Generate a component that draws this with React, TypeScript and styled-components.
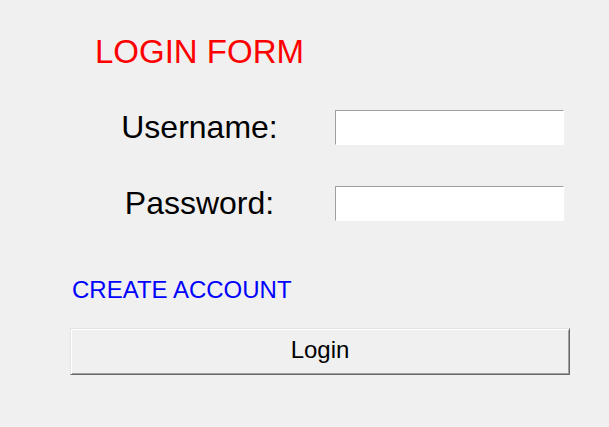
import React from "react";
import styled, { createGlobalStyle } from "styled-components";

const Global = createGlobalStyle`
  html, body { margin: 0; padding: 0; background: #f0f0f0; }
  body { font-family: "Liberation Sans", Arial, sans-serif; }
  * { box-sizing: border-box; }
`;

const Page = styled.div`
  width: 609px;
  height: 427px;
  padding: 32px 0 0 70px;
  display: flex;
  flex-direction: column;
  background: #f0f0f0;
`;

const FormGrid = styled.div`
  display: grid;
  grid-template-columns: 259px 229px;
  column-gap: 6px;
`;

const Title = styled.h1`
  grid-column: 1;
  margin: 0 0 38px;
  height: 40px;
  line-height: 40px;
  font-size: 33px;
  font-weight: normal;
  color: #ff0000;
  text-align: center;
`;

const Label = styled.label<{ $gap: number }>`
  grid-column: 1;
  height: 35px;
  margin-bottom: ${(p) => p.$gap}px;
  display: flex;
  align-items: center;
  justify-content: center;
  font-size: 32px;
  color: #000;
  white-space: nowrap;
`;

const Field = styled.input<{ $gap: number }>`
  grid-column: 2;
  height: 35px;
  width: 229px;
  margin: 0 0 ${(p) => p.$gap}px;
  padding: 0 4px;
  background: #fff;
  border: 1px solid;
  border-color: #a0a0a0 #fff #fff #a0a0a0;
  font-family: "Liberation Sans", Arial, sans-serif;
  font-size: 16px;
  outline: none;
`;

const LinkText = styled.a`
  display: block;
  margin: 1px 0 25px 2px;
  height: 26px;
  line-height: 26px;
  font-size: 24px;
  color: #0000ff;
  text-decoration: none;
  cursor: pointer;
`;

const Button = styled.button`
  width: 500px;
  height: 47px;
  padding: 0 0 3px;
  display: flex;
  align-items: center;
  justify-content: center;
  background: #f0f0f0;
  border: 1px solid;
  border-color: #e3e3e3 #696969 #696969 #e3e3e3;
  box-shadow: inset 1px 1px 0 #ffffff, inset -1px -1px 0 #a0a0a0;
  font-family: "Liberation Sans", Arial, sans-serif;
  font-size: 24px;
  color: #000;
`;

export default function App() {
  return (
    <>
      <Global />
      <Page>
        <FormGrid>
          <Title>LOGIN FORM</Title>
          <div />
          <Label $gap={41} htmlFor="user">Username:</Label>
          <Field $gap={41} id="user" type="text" />
          <Label $gap={55} htmlFor="pass">Password:</Label>
          <Field $gap={55} id="pass" type="password" />
        </FormGrid>
        <LinkText>CREATE ACCOUNT</LinkText>
        <Button>Login</Button>
      </Page>
    </>
  );
}
